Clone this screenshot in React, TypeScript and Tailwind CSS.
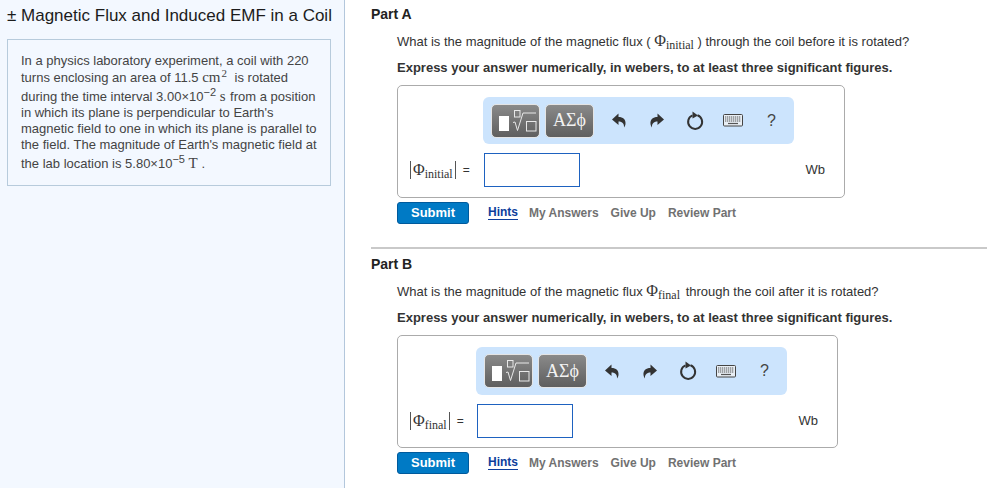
import * as React from "react";

const serif = "font-['Liberation_Serif',serif]";

function Sub({ children }: { children: React.ReactNode }) {
  return <span className={`${serif} relative top-[3px] text-[12px] leading-none`}>{children}</span>;
}

function Sup({ children, className = "" }: { children: React.ReactNode; className?: string }) {
  return <span className={`relative -top-[5px] text-[11px] leading-none ${className}`}>{children}</span>;
}

function Phi({ name }: { name: string }) {
  return (
    <span className={`${serif} text-[16px] leading-none`}>
      Φ<Sub>{name}</Sub>
    </span>
  );
}

function Templates() {
  return (
    <svg width="47" height="32" viewBox="0 0 47 32" className="block">
      <rect x="7" y="11" width="10" height="15" fill="#fff" />
      <rect x="22.500" y="5.500" width="5.500" height="6.500" fill="none" stroke="#e8e8e8" strokeWidth="1" />
      <path d="M21 17.500l2-.5 2.500 8.500 5.500-17.500h13" fill="none" stroke="#e8e8e8" strokeWidth="1" />
      <rect x="34.500" y="16.500" width="9.500" height="9.500" fill="none" stroke="#e8e8e8" strokeWidth="1" />
    </svg>
  );
}

function Toolbar({ height }: { height: string }) {
  return (
    <div className={`flex w-[311px] items-center rounded-[6px] bg-[#cce4fd] pl-[8px] ${height}`}>
      <div className="grid h-[34px] w-[49px] place-items-center rounded-[5px] border border-[#e4e4e4] bg-gradient-to-b from-[#8a8a8a] to-[#5f5f5f]">
        <Templates />
      </div>
      <div className={`ml-[5px] grid h-[34px] w-[49px] place-items-center rounded-[5px] border border-[#e4e4e4] bg-gradient-to-b from-[#8a8a8a] to-[#5f5f5f] text-[18px] text-[#f2f2f2] ${serif}`}>
        ΑΣϕ
      </div>
      {/* undo */}
      <svg width="14" height="15" viewBox="0 0 14 15" className="ml-[18px] shrink-0">
        <path d="M0 6.500 6.500.5V4c4.500 0 7.500 2.500 7 7-.2 1.500-.8 2.500-1.500 3.500.3-3.500-1.500-6-5.500-6V12z" fill="#333" />
      </svg>
      {/* redo */}
      <svg width="14" height="15" viewBox="0 0 14 15" className="ml-[24px] shrink-0">
        <path d="M14 6.500 7.500.5V4C3 4 0 6.500.5 11c.2 1.500.8 2.500 1.500 3.500-.3-3.500 1.500-6 5.500-6V12z" fill="#333" />
      </svg>
      {/* reset */}
      <svg width="18" height="20" viewBox="0 0 18 20" className="ml-[22px] shrink-0">
        <path d="M11.500 4.300a7 7 0 1 1-5 .1" fill="none" stroke="#333" strokeWidth="2" />
        <path d="M6.500 0.500 12 4.500 6.500 7.500z" fill="#333" />
      </svg>
      {/* keyboard */}
      <svg width="20" height="13" viewBox="0 0 20 13" className="ml-[19px] shrink-0">
        <rect x="0.500" y="0.500" width="19" height="11.500" rx="1" fill="#e8eef4" stroke="#444" />
        <path d="M2 3h16M2 5h16M2 7h16" stroke="#555" strokeWidth="1" strokeDasharray="1.300 .7" />
        <path d="M5 9.500h10" stroke="#555" strokeWidth="1.200" />
      </svg>
      <span className="ml-[24px] text-[16px] leading-none text-[#444]">?</span>
    </div>
  );
}

function ActionLinks() {
  return (
    <div className="mt-[4px] flex items-center text-[12px] font-bold text-[#717171]">
      <button className="h-[22px] w-[72px] rounded-[3px] border border-[#005a9c] bg-[#007ac5] text-[13px] font-bold text-white">
        Submit
      </button>
      <span className="ml-[19px] border-b border-[#0d3e9c] leading-[13px] text-[#0d3e9c]">Hints</span>
      <span className="ml-[11px]">My Answers</span>
      <span className="ml-[12px]">Give Up</span>
      <span className="ml-[12px]">Review Part</span>
    </div>
  );
}

function Part({
  title,
  question,
  name,
  boxWidth,
  toolbarGap,
  labelWidth,
  toolbarHeight,
}: {
  title: string;
  question: React.ReactNode;
  name: string;
  boxWidth: string;
  toolbarGap: string;
  labelWidth: string;
  toolbarHeight: string;
}) {
  return (
    <section>
      <h2 className="text-[14px] leading-[16px] font-bold text-[#222]">{title}</h2>
      <div className="ml-[26px]">
        <p className="mt-[11px] text-[13px] leading-[16px] text-[#333]">{question}</p>
        <p className="mt-[10px] text-[13px] leading-[16px] font-bold text-[#333]">
          Express your answer numerically, in webers, to at least three significant figures.
        </p>
        <div className={`mt-[9px] h-[113px] rounded-[5px] border border-[#ababab] pt-[11px] ${boxWidth}`}>
          <div className={toolbarGap}>
            <Toolbar height={toolbarHeight} />
          </div>
          <div className="mt-[9px] flex items-center pr-[19px] pl-[12px]">
            <div className={`flex items-center ${labelWidth}`}>
              <span className="border-x border-[#555] px-[2px] leading-[18px] text-[#333]">
                <Phi name={name} />
              </span>
              <span className="ml-[7px] text-[12px] text-[#333]">=</span>
            </div>
            <div className="h-[34px] w-[96px] border border-[#1e62c0] bg-white" />
            <span className="ml-auto text-[13px] text-[#333]">Wb</span>
          </div>
        </div>
        <ActionLinks />
      </div>
    </section>
  );
}

export default function App() {
  return (
    <div className="flex h-[488px] w-[987px] overflow-hidden bg-white font-['Liberation_Sans',Arial,sans-serif]">
      <aside className="h-full w-[345px] shrink-0 border-r border-[#b3c7dc] bg-[#f3f8ff] pt-[5px] pl-[7px]">
        <h1 className="text-[17px] leading-[21px] whitespace-nowrap text-[#1c1c1c]">± Magnetic Flux and Induced EMF in a Coil</h1>
        <div className="mt-[13px] h-[147px] w-[324px] border border-[#b7cbdc] pt-[13px] pl-[13px] text-[13px] leading-[16px] text-[#444]">
          <p className="whitespace-nowrap">In a physics laboratory experiment, a coil with 220</p>
          <p className="whitespace-nowrap">
            turns enclosing an area of 11.5 <span className={`${serif} text-[15px]`}>cm<Sup className="mr-[4px] ml-[1px]">2</Sup></span> is rotated
          </p>
          <p className="mt-[2px] whitespace-nowrap">
            during the time interval 3.00×10<Sup>−2</Sup> <span className={`${serif} mr-[1px] text-[15px]`}>s</span> from a position
          </p>
          <p className="whitespace-nowrap">in which its plane is perpendicular to Earth's</p>
          <p className="whitespace-nowrap">magnetic field to one in which its plane is parallel to</p>
          <p className="whitespace-nowrap">the field. The magnitude of Earth's magnetic field at</p>
          <p className="mt-[2px] whitespace-nowrap">
            the lab location is 5.80×10<Sup>−5</Sup> <span className={`${serif} text-[15px]`}>T</span> .
          </p>
        </div>
      </aside>
      <main className="min-w-0 flex-1 pt-[6px] pl-[26px]">
        <Part
          title="Part A"
          name="initial"
          boxWidth="w-[448px]"
          toolbarGap="ml-[85px]"
          labelWidth="w-[74px]"
          toolbarHeight="h-[47px]"
          question={
            <>
              What is the magnitude of the magnetic flux ( <Phi name="initial" /> ) through the coil before it is rotated?
            </>
          }
        />
        <div className="mt-[23px] mb-[7px] h-[2px] bg-[#c9c9c9]" />
        <Part
          title="Part B"
          name="final"
          boxWidth="w-[441px]"
          toolbarGap="ml-[78px]"
          labelWidth="w-[67px]"
          toolbarHeight="h-[48px]"
          question={
            <>
              What is the magnitude of the magnetic flux <Phi name="final" /> <span className="ml-[2px]">through the coil after it is rotated?</span>
            </>
          }
        />
      </main>
    </div>
  );
}
